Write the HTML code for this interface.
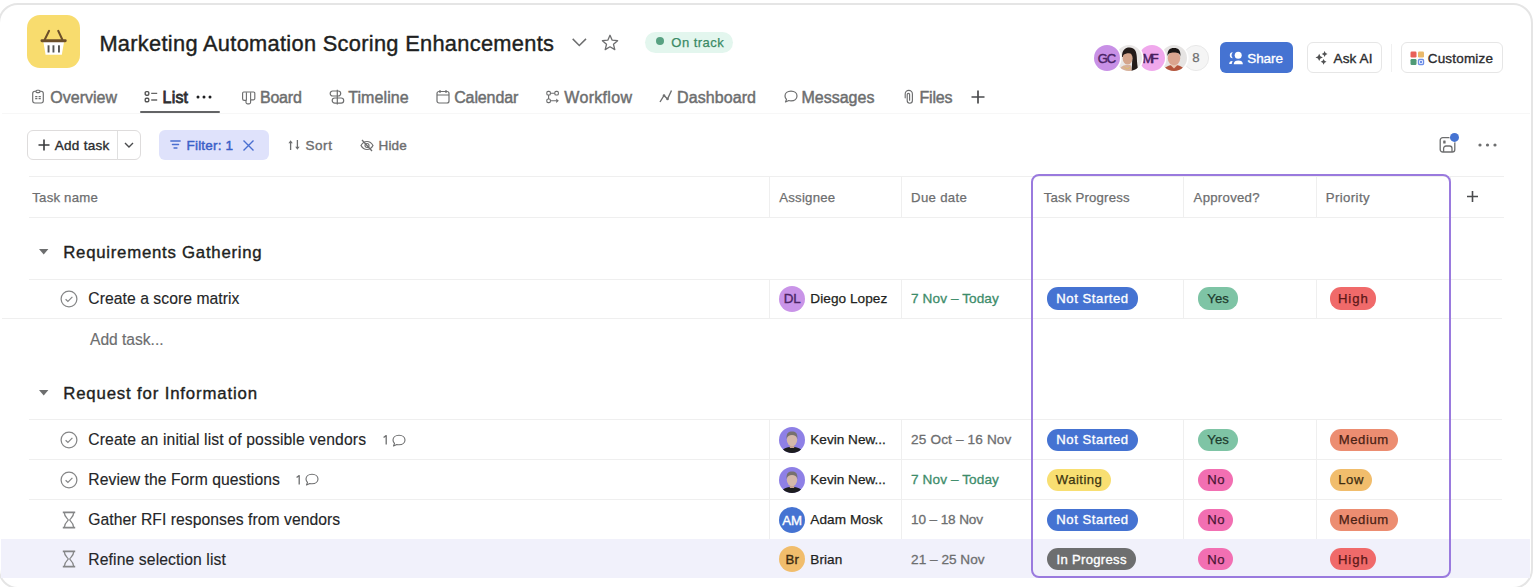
<!DOCTYPE html>
<html><head><meta charset="utf-8">
<style>
html,body{margin:0;padding:0;background:#fff;}
body{width:1533px;height:587px;position:relative;overflow:hidden;font-family:"Liberation Sans",sans-serif;}
.t{position:absolute;white-space:nowrap;line-height:normal;}
.box{position:absolute;box-sizing:border-box;}
.abs{position:absolute;overflow:visible;}
.hl{position:absolute;height:1px;background:#edeae9;}
.vl{position:absolute;width:1px;background:#edeae9;}
.pill{position:absolute;height:22px;border-radius:11px;}
</style></head><body>
<div class="box" style="left:-1.80px;top:2.80px;width:1534.30px;height:586.30px;border:2.5px solid #e5e5e5;border-radius:20px;"></div>
<div class="box" style="left:27.00px;top:15.00px;width:53.00px;height:53.00px;border-radius:13px;background:#f8dc6e"></div>
<svg class="abs" style="left:27.00px;top:15.00px" width="53" height="53" viewBox="0 0 53 53">
<path d="M22.1 15.8 L17.8 24.5 M31.2 15.8 L35.3 24.5" stroke="#6b4e2a" stroke-width="2" stroke-linecap="round"/>
<path d="M16.4 27 L37 27 L34.8 39.7 L18.6 39.7 Z" fill="#fff"/>
<rect x="13.5" y="24.2" width="26.2" height="3" rx="1.4" fill="#6b4e2a"/>
<rect x="20.6" y="30.3" width="1.9" height="7.2" fill="#555"/>
<rect x="25.5" y="30.3" width="1.9" height="7.2" fill="#555"/>
<rect x="31" y="30.3" width="1.9" height="7.2" fill="#555"/>
</svg>
<div class="t" style="left:99.40px;top:31.07px;font-size:21.80px;letter-spacing:0.307px;color:#1e1f21;-webkit-text-stroke:0.40px #1e1f21;">Marketing Automation Scoring Enhancements</div>
<svg class="abs" style="left:570.00px;top:36.00px" width="18" height="12" viewBox="0 0 18 12"><path d="M2.7 2.9 L9.3 9.5 L16 2.9" fill="none" stroke="#6d6e6f" stroke-width="1.5"/></svg>
<svg class="abs" style="left:600.00px;top:33.00px" width="20" height="19" viewBox="0 0 20 19"><path d="M10 2.3 L12.2 7.2 L17.6 7.7 L13.5 11.3 L14.8 16.6 L10 13.8 L5.2 16.6 L6.5 11.3 L2.4 7.7 L7.8 7.2 Z" fill="none" stroke="#6d6e6f" stroke-width="1.3" stroke-linejoin="round"/></svg>
<div class="box" style="left:645.00px;top:31.50px;width:88.00px;height:21.50px;border-radius:11px;background:#e3f6ee"></div>
<div class="box" style="left:655.70px;top:37.30px;width:8.20px;height:8.20px;border-radius:50%;background:#58a182"></div>
<div class="t" style="left:671.30px;top:35.34px;font-size:13.00px;letter-spacing:0.482px;color:#3a8a65;-webkit-text-stroke:0.25px #3a8a65;">On track</div>
<svg class="abs" style="left:1181.20px;top:42.80px" width="30" height="30" viewBox="0 0 30 30"><circle cx="15" cy="15" r="14.6" fill="#fff"/><circle cx="15" cy="15" r="12.6" fill="#f5f5f5" stroke="#e6e6e6" stroke-width="0.9"/></svg>
<div class="t" style="left:1192.20px;top:50.45px;font-size:13.20px;letter-spacing:-0.441px;color:#6d6e6f;-webkit-text-stroke:0.25px #6d6e6f;">8</div>
<svg class="abs" style="left:1158.90px;top:42.80px" width="30" height="30" viewBox="0 0 30 30"><circle cx="15" cy="15" r="14.6" fill="#fff"/><clipPath id="c2"><circle cx="15" cy="15" r="13"/></clipPath>
<g clip-path="url(#c2)"><rect width="30" height="30" fill="#e6e4e3"/>
<path d="M3 31 C4 24.5 8.5 22 15 22 C21.5 22 26 24.5 27 31 Z" fill="#b5553c"/>
<path d="M11 21.5 L15 25.5 L19 21.5 Z" fill="#e9c7b2"/>
<ellipse cx="15" cy="15.3" rx="6.2" ry="7" fill="#dba58f"/>
<path d="M8.6 13.5 C8 7.5 10.5 5 15 5 C19.5 5 22 7.5 21.4 13.5 C20.8 10.5 19 9.6 15 9.6 C11 9.6 9.2 10.5 8.6 13.5 Z" fill="#1b1615"/>
</g></svg>
<svg class="abs" style="left:1136.60px;top:42.80px" width="30" height="30" viewBox="0 0 30 30"><circle cx="15" cy="15" r="14.6" fill="#fff"/><circle cx="15" cy="15" r="13" fill="#f0a8ec"/></svg>
<div class="t" style="left:1142.40px;top:50.63px;font-size:13.00px;letter-spacing:-2.471px;color:#4a1f5e;-webkit-text-stroke:0.45px #4a1f5e;">MF</div>
<svg class="abs" style="left:1114.30px;top:42.80px" width="30" height="30" viewBox="0 0 30 30"><circle cx="15" cy="15" r="14.6" fill="#fff"/><clipPath id="c1"><circle cx="15" cy="15" r="13"/></clipPath>
<g clip-path="url(#c1)"><rect width="30" height="30" fill="#e9e7e6"/>
<path d="M8 14 C8 7 11 4.5 15.5 4.5 C20.5 4.5 22.5 8 22.8 14 C23 20 23.5 25 25 30 L17 30 C18 24 18.5 18 18 13 Z" fill="#231b19"/>
<ellipse cx="13.6" cy="15.2" rx="4.9" ry="6.3" fill="#d4a58c"/>
<path d="M9.2 12 C9.5 8.5 12 7.2 15 7.4 C17 7.6 18.3 9 18.6 11 C16 9.8 12 9.8 9.2 12 Z" fill="#231b19"/>
<path d="M4 30 C5 25 8 22.5 12 22 L16.5 22 C17.5 24 17.8 27 17.5 30 Z" fill="#d8b19b"/>
<path d="M10 23.5 C11.5 26 14 26.5 16 24" fill="none" stroke="#e0c060" stroke-width="0.8"/>
</g></svg>
<svg class="abs" style="left:1092.00px;top:42.80px" width="30" height="30" viewBox="0 0 30 30"><circle cx="15" cy="15" r="14.6" fill="#fff"/><circle cx="15" cy="15" r="13" fill="#c890e6"/></svg>
<div class="t" style="left:1097.70px;top:50.63px;font-size:13.00px;letter-spacing:-1.100px;color:#4b2466;-webkit-text-stroke:0.45px #4b2466;">GC</div>
<div class="box" style="left:1220.00px;top:42.20px;width:72.50px;height:31.30px;border-radius:6px;background:#4573d2"></div>
<svg class="abs" style="left:1228.00px;top:50.00px" width="17" height="16" viewBox="0 0 17 16">
<path d="M4.8 2.2 A3 3 0 0 0 4.8 8.2 A4.6 4.6 0 0 1 4.8 2.2 Z" fill="#fff"/>
<circle cx="10.2" cy="5.2" r="3.5" fill="#fff"/>
<path d="M1.2 14 C1.2 12 2.2 11 4.2 11 L4.6 11 L3.6 14 Z" fill="#fff"/>
<path d="M5.7 14.2 C5.9 11.6 7.5 10.6 10.3 10.6 C13.1 10.6 14.7 11.6 14.9 14.2 Z" fill="#fff"/>
</svg>
<div class="t" style="left:1247.20px;top:50.78px;font-size:13.50px;letter-spacing:-0.057px;color:#ffffff;-webkit-text-stroke:0.35px #ffffff;">Share</div>
<div class="box" style="left:1306.50px;top:42.20px;width:75.30px;height:31.30px;border-radius:6px;border:1px solid #e6e6e6;background:#fff"></div>
<svg class="abs" style="left:1315.00px;top:51.00px" width="14" height="14" viewBox="0 0 14 14"><path d="M4.20 2.70 L5.42 5.18 L7.90 6.40 L5.42 7.62 L4.20 10.10 L2.98 7.62 L0.50 6.40 L2.98 5.18 Z M9.60 0.10 L10.56 2.04 L12.50 3.00 L10.56 3.96 L9.60 5.90 L8.64 3.96 L6.70 3.00 L8.64 2.04 Z M8.60 7.90 L9.56 9.84 L11.50 10.80 L9.56 11.76 L8.60 13.70 L7.64 11.76 L5.70 10.80 L7.64 9.84 Z" fill="#505152"/></svg>
<div class="t" style="left:1333.50px;top:50.78px;font-size:13.50px;letter-spacing:0.147px;color:#2b2c2e;-webkit-text-stroke:0.35px #2b2c2e;">Ask AI</div>
<div class="box" style="left:1390.50px;top:44.00px;width:1.00px;height:28.00px;background:#f0f0f0"></div>
<div class="box" style="left:1400.50px;top:42.20px;width:102.50px;height:31.30px;border-radius:6px;border:1px solid #e6e6e6;background:#fff"></div>
<svg class="abs" style="left:1409.50px;top:51.00px" width="15" height="15" viewBox="0 0 15 15">
<rect x="0.5" y="0.5" width="6" height="6" rx="1.2" fill="#e8615a"/>
<rect x="8" y="0.5" width="6" height="6" rx="1.2" fill="#eab96b"/>
<rect x="0.5" y="8" width="6" height="6" rx="1.2" fill="#4f9a76"/>
<rect x="8.5" y="8.5" width="5" height="5" rx="1" fill="#fff" stroke="#6d8ee8" stroke-width="1.4"/>
<rect x="10" y="10" width="2" height="2" fill="#6d8ee8"/>
</svg>
<div class="t" style="left:1427.70px;top:50.78px;font-size:13.50px;letter-spacing:0.191px;color:#2b2c2e;-webkit-text-stroke:0.35px #2b2c2e;">Customize</div>
<div class="t" style="left:50.30px;top:88.92px;font-size:16.00px;color:#6d6e6f;-webkit-text-stroke:0.45px #6d6e6f;">Overview</div>
<div class="t" style="left:162.60px;top:88.92px;font-size:16.00px;letter-spacing:0.167px;color:#2e2f31;-webkit-text-stroke:0.80px #2e2f31;">List</div>
<div class="t" style="left:260.00px;top:88.92px;font-size:16.00px;letter-spacing:-0.224px;color:#6d6e6f;-webkit-text-stroke:0.45px #6d6e6f;">Board</div>
<div class="t" style="left:348.20px;top:88.92px;font-size:16.00px;letter-spacing:0.090px;color:#6d6e6f;-webkit-text-stroke:0.45px #6d6e6f;">Timeline</div>
<div class="t" style="left:454.20px;top:88.92px;font-size:16.00px;letter-spacing:-0.119px;color:#6d6e6f;-webkit-text-stroke:0.45px #6d6e6f;">Calendar</div>
<div class="t" style="left:564.30px;top:88.92px;font-size:16.00px;letter-spacing:0.315px;color:#6d6e6f;-webkit-text-stroke:0.45px #6d6e6f;">Workflow</div>
<div class="t" style="left:677.00px;top:88.92px;font-size:16.00px;letter-spacing:0.090px;color:#6d6e6f;-webkit-text-stroke:0.45px #6d6e6f;">Dashboard</div>
<div class="t" style="left:801.40px;top:88.92px;font-size:16.00px;letter-spacing:0.011px;color:#6d6e6f;-webkit-text-stroke:0.45px #6d6e6f;">Messages</div>
<div class="t" style="left:919.40px;top:88.92px;font-size:16.00px;letter-spacing:-0.146px;color:#6d6e6f;-webkit-text-stroke:0.45px #6d6e6f;">Files</div>
<svg class="abs" style="left:31.00px;top:88.00px" width="14" height="17" viewBox="0 0 14 17"><rect x="1.7" y="3.2" width="10.6" height="11.8" rx="2.2" fill="none" stroke="#6d6e6f" stroke-width="1.15"/><rect x="5" y="2.2" width="4" height="2.4" rx="1" fill="#fff" stroke="#6d6e6f" stroke-width="1.1"/><path d="M4.2 8.6h2.2M7.6 8.6h2.2M4.2 10.6h2.2M7.6 10.6h2.2" stroke="#6d6e6f" stroke-width="1.1"/></svg>
<svg class="abs" style="left:144.00px;top:90.00px" width="15" height="14" viewBox="0 0 15 14"><rect x="1.2" y="1.6" width="3.6" height="3.6" rx="1.2" fill="none" stroke="#555" stroke-width="1.4"/><rect x="1.2" y="8.2" width="3.6" height="3.6" rx="1.2" fill="none" stroke="#555" stroke-width="1.4"/><path d="M7.2 3.4h6M7.2 10h6" stroke="#666" stroke-width="1.4"/></svg>
<svg class="abs" style="left:196.00px;top:95.00px" width="16" height="4" viewBox="0 0 16 4"><circle cx="2" cy="2" r="1.5" fill="#1e1f21"/><circle cx="8" cy="2" r="1.5" fill="#1e1f21"/><circle cx="14" cy="2" r="1.5" fill="#1e1f21"/></svg>
<svg class="abs" style="left:241.00px;top:89.80px" width="16" height="16" viewBox="0 0 16 16"><path d="M1.6 3.2a1.2 1.2 0 0 1 1.2-1.2h9.8a1.2 1.2 0 0 1 1.2 1.2v5.2a1.4 1.4 0 0 1-1.4 1.4h-2.8v2.4a1.6 1.6 0 0 1-1.6 1.6h-1.4a1.6 1.6 0 0 1-1.6-1.6v-1.8h-1.8a1.6 1.6 0 0 1-1.6-1.6z" fill="none" stroke="#6d6e6f" stroke-width="1.15"/><path d="M5.4 2.2v8.4M9.6 2.2v7.6" stroke="#6d6e6f" stroke-width="1.1"/></svg>
<svg class="abs" style="left:328.50px;top:89.00px" width="16" height="16" viewBox="0 0 16 16"><rect x="1.2" y="2" width="10.5" height="5" rx="2.5" fill="none" stroke="#6d6e6f" stroke-width="1.2"/><rect x="3.2" y="9" width="11.5" height="5.2" rx="2.6" fill="none" stroke="#6d6e6f" stroke-width="1.2"/><path d="M8.3 0.8v14.8" stroke="#6d6e6f" stroke-width="1.2"/></svg>
<svg class="abs" style="left:435.50px;top:88.50px" width="14" height="15" viewBox="0 0 14 15"><rect x="1" y="2.5" width="12" height="11.5" rx="2" fill="none" stroke="#6d6e6f" stroke-width="1.2"/><path d="M1 6h12M4 1v3M10 1v3" stroke="#6d6e6f" stroke-width="1.2"/></svg>
<svg class="abs" style="left:546.00px;top:89.00px" width="14" height="15" viewBox="0 0 14 15"><rect x="0.8" y="2.4" width="3.6" height="3.6" rx="1.3" fill="none" stroke="#6d6e6f" stroke-width="1.1"/><rect x="8.8" y="2.4" width="3.6" height="3.6" rx="1.3" fill="none" stroke="#6d6e6f" stroke-width="1.1"/><rect x="0.8" y="10" width="3.6" height="3.6" rx="1.3" fill="none" stroke="#6d6e6f" stroke-width="1.1"/><path d="M4.4 4.2h4.4M2.6 6v4M4.4 11.8h6" fill="none" stroke="#6d6e6f" stroke-width="1.1"/><path d="M10.2 9.6L12.8 11.8L10.2 14Z" fill="#6d6e6f"/></svg>
<svg class="abs" style="left:658.50px;top:89.00px" width="14" height="14" viewBox="0 0 14 14"><path d="M1 13 L5 6.5 L8.5 10 L12.5 1.5" fill="none" stroke="#6d6e6f" stroke-width="1.4" stroke-linejoin="round"/><circle cx="5" cy="6.5" r="1.3" fill="#6d6e6f"/><circle cx="8.5" cy="10" r="1.3" fill="#6d6e6f"/></svg>
<svg class="abs" style="left:783.50px;top:90.00px" width="14" height="13" viewBox="0 0 14 13"><path d="M7 1.2C10.6 1.2 13 3.3 13 6s-2.4 4.8-6 4.8c-.8 0-1.5-.1-2.2-.3L1.5 12l1-2.6C1.6 8.5 1 7.3 1 6c0-2.7 2.4-4.8 6-4.8z" fill="none" stroke="#6d6e6f" stroke-width="1.2" stroke-linejoin="round"/></svg>
<svg class="abs" style="left:902.50px;top:88.00px" width="12" height="17" viewBox="0 0 12 17"><path d="M2.2 9.8V6a3.6 3.6 0 0 1 7.2 0v6.6a2.6 2.6 0 0 1-5.2 0V6.6a1.2 1.2 0 0 1 2.4 0v5.6" fill="none" stroke="#6d6e6f" stroke-width="1.15" stroke-linecap="round"/></svg>
<svg class="abs" style="left:970.50px;top:89.50px" width="14" height="14" viewBox="0 0 14 14"><path d="M7 0.5v13M0.5 7h13" stroke="#4a4b4d" stroke-width="1.7"/></svg>
<div class="box" style="left:140.00px;top:110.90px;width:79.50px;height:2.60px;background:#636466;border-radius:1.3px"></div>
<div class="box" style="left:2.00px;top:112.50px;width:1528.00px;height:1.20px;background:#f7f7f7"></div>
<div class="box" style="left:27.40px;top:130.20px;width:113.20px;height:30.00px;border-radius:6px;border:1px solid #dedcdc;background:#fff"></div>
<div class="box" style="left:117.20px;top:130.70px;width:1.00px;height:29.00px;background:#e0e0e0"></div>
<svg class="abs" style="left:37.00px;top:138.00px" width="14" height="14" viewBox="0 0 14 14"><path d="M7 1.5v11M1.5 7h11" stroke="#3a3b3d" stroke-width="1.6"/></svg>
<div class="t" style="left:54.80px;top:137.78px;font-size:13.50px;letter-spacing:0.281px;color:#2b2c2e;-webkit-text-stroke:0.35px #2b2c2e;">Add task</div>
<svg class="abs" style="left:122.00px;top:140.00px" width="14" height="10" viewBox="0 0 14 10"><path d="M3 3 L7 7 L11 3" fill="none" stroke="#4a4b4d" stroke-width="1.4"/></svg>
<div class="box" style="left:159.10px;top:130.10px;width:109.60px;height:29.90px;border-radius:6px;background:#dfe2fb"></div>
<svg class="abs" style="left:169.50px;top:139.00px" width="11" height="12" viewBox="0 0 11 12"><path d="M0.8 2h9.4M2.4 5.5h6.2M4 9h3" stroke="#4a6fd0" stroke-width="1.3" stroke-linecap="round"/></svg>
<div class="t" style="left:186.50px;top:137.78px;font-size:13.50px;letter-spacing:0.199px;color:#3a60c8;-webkit-text-stroke:0.45px #3a60c8;">Filter: 1</div>
<svg class="abs" style="left:242.00px;top:139.00px" width="13" height="13" viewBox="0 0 13 13"><path d="M1.5 1.5l10 10M11.5 1.5l-10 10" stroke="#4a6fd0" stroke-width="1.4"/></svg>
<svg class="abs" style="left:288.00px;top:139.00px" width="12" height="12" viewBox="0 0 12 12"><path d="M2.6 11V3.5M9.4 1v7.5" stroke="#6d6e6f" stroke-width="1.3"/><path d="M0.4 4.3L2.6 1.3L4.8 4.3Z M7.2 7.7L9.4 10.7L11.6 7.7Z" fill="#6d6e6f"/></svg>
<div class="t" style="left:305.50px;top:137.78px;font-size:13.50px;letter-spacing:0.547px;color:#6d6e6f;-webkit-text-stroke:0.40px #6d6e6f;">Sort</div>
<svg class="abs" style="left:359.50px;top:138.50px" width="14" height="13" viewBox="0 0 14 13"><path d="M1 6.5C2.5 3.8 4.6 2.5 7 2.5s4.5 1.3 6 4c-1.5 2.7-3.6 4-6 4s-4.5-1.3-6-4z" fill="none" stroke="#6d6e6f" stroke-width="1.2"/><circle cx="7" cy="6.5" r="2" fill="none" stroke="#6d6e6f" stroke-width="1.2"/><path d="M2 1l10 11" stroke="#6d6e6f" stroke-width="1.3"/></svg>
<div class="t" style="left:378.50px;top:137.78px;font-size:13.50px;letter-spacing:0.178px;color:#6d6e6f;-webkit-text-stroke:0.40px #6d6e6f;">Hide</div>
<svg class="abs" style="left:1438.00px;top:135.00px" width="22" height="20" viewBox="0 0 22 20"><rect x="2.2" y="2.6" width="14.6" height="14.4" rx="2.6" fill="none" stroke="#6d6e6f" stroke-width="1.3"/><rect x="5.2" y="5.6" width="2.4" height="2.8" rx="0.5" fill="#6d6e6f"/><path d="M5.6 17V13.4a2.4 2.4 0 0 1 2.4-2.4h3.6a2.4 2.4 0 0 1 2.4 2.4V17" fill="none" stroke="#6d6e6f" stroke-width="1.3"/><circle cx="16.5" cy="2.4" r="5" fill="#fff"/><circle cx="16.5" cy="2.4" r="4.5" fill="#4573d2"/></svg>
<svg class="abs" style="left:1477.00px;top:141.80px" width="21" height="6" viewBox="0 0 21 6"><circle cx="3" cy="3" r="1.6" fill="#6d6e6f"/><circle cx="10.5" cy="3" r="1.6" fill="#6d6e6f"/><circle cx="18" cy="3" r="1.6" fill="#6d6e6f"/></svg>
<div class="box" style="left:28.60px;top:175.80px;width:1475.40px;height:1.00px;background:#efefef"></div>
<div class="box" style="left:28.60px;top:216.60px;width:1475.40px;height:1.00px;background:#efefef"></div>
<div class="box" style="left:769.20px;top:175.80px;width:1.00px;height:40.80px;background:#efefef"></div>
<div class="box" style="left:901.20px;top:175.80px;width:1.00px;height:40.80px;background:#efefef"></div>
<div class="box" style="left:1183.20px;top:175.80px;width:1.00px;height:40.80px;background:#efefef"></div>
<div class="box" style="left:1315.50px;top:175.80px;width:1.00px;height:40.80px;background:#efefef"></div>
<div class="box" style="left:1449.50px;top:175.80px;width:1.00px;height:40.80px;background:#efefef"></div>
<div class="t" style="left:32.30px;top:190.05px;font-size:13.20px;letter-spacing:0.209px;color:#6d6e6f;-webkit-text-stroke:0.25px #6d6e6f;">Task name</div>
<div class="t" style="left:779.20px;top:190.05px;font-size:13.20px;letter-spacing:0.242px;color:#6d6e6f;-webkit-text-stroke:0.25px #6d6e6f;">Assignee</div>
<div class="t" style="left:911.10px;top:190.05px;font-size:13.20px;letter-spacing:0.304px;color:#6d6e6f;-webkit-text-stroke:0.25px #6d6e6f;">Due date</div>
<div class="t" style="left:1043.70px;top:190.05px;font-size:13.20px;letter-spacing:0.197px;color:#6d6e6f;-webkit-text-stroke:0.25px #6d6e6f;">Task Progress</div>
<div class="t" style="left:1193.60px;top:190.05px;font-size:13.20px;letter-spacing:0.269px;color:#6d6e6f;-webkit-text-stroke:0.25px #6d6e6f;">Approved?</div>
<div class="t" style="left:1325.70px;top:190.05px;font-size:13.20px;letter-spacing:0.418px;color:#6d6e6f;-webkit-text-stroke:0.25px #6d6e6f;">Priority</div>
<svg class="abs" style="left:1465.50px;top:190.00px" width="13" height="13" viewBox="0 0 13 13"><path d="M6.5 1v11M1 6.5h11" stroke="#4a4b4d" stroke-width="1.6"/></svg>
<svg class="abs" style="left:37.60px;top:247.80px" width="12" height="8" viewBox="0 0 12 8"><path d="M1 1 L10.4 1 L5.7 6.6 Z" fill="#6d6e6f"/></svg>
<div class="t" style="left:63.20px;top:242.80px;font-size:16.80px;letter-spacing:0.746px;color:#1e1f21;-webkit-text-stroke:0.38px #1e1f21;">Requirements Gathering</div>
<div class="box" style="left:28.60px;top:278.50px;width:1473.40px;height:1.00px;background:#efefef"></div>
<svg class="abs" style="left:37.60px;top:388.80px" width="12" height="8" viewBox="0 0 12 8"><path d="M1 1 L10.4 1 L5.7 6.6 Z" fill="#6d6e6f"/></svg>
<div class="t" style="left:63.20px;top:383.80px;font-size:16.80px;letter-spacing:0.838px;color:#1e1f21;-webkit-text-stroke:0.38px #1e1f21;">Request for Information</div>
<div class="box" style="left:28.60px;top:419.40px;width:1473.40px;height:1.00px;background:#efefef"></div>
<svg class="abs" style="left:60.20px;top:289.50px" width="18" height="18" viewBox="0 0 18 18"><circle cx="9" cy="9" r="7.9" fill="none" stroke="#858687" stroke-width="1.25"/><path d="M5.6 9.2 L7.9 11.4 L12.4 6.9" fill="none" stroke="#858687" stroke-width="1.2"/></svg>
<div class="t" style="left:88.30px;top:289.89px;font-size:15.70px;letter-spacing:0.056px;color:#252628;-webkit-text-stroke:0.15px #252628;">Create a score matrix</div>
<div class="box" style="left:769.20px;top:279.00px;width:1.00px;height:39.20px;background:#efefef"></div>
<div class="box" style="left:901.20px;top:279.00px;width:1.00px;height:39.20px;background:#efefef"></div>
<div class="box" style="left:1183.20px;top:279.00px;width:1.00px;height:39.20px;background:#efefef"></div>
<div class="box" style="left:1315.50px;top:279.00px;width:1.00px;height:39.20px;background:#efefef"></div>
<div class="box" style="left:779.20px;top:285.50px;width:26.00px;height:26.00px;border-radius:50%;background:#c994e8"></div><div class="t" style="left:783.63px;top:291.46px;font-size:13.40px;color:#4a2466;-webkit-text-stroke:0.35px #4a2466;">DL</div><div class="t" style="left:810.30px;top:291.19px;font-size:13.60px;letter-spacing:0.063px;color:#1e1f21;-webkit-text-stroke:0.25px #1e1f21;">Diego Lopez</div>
<div class="t" style="left:911.10px;top:291.19px;font-size:13.60px;letter-spacing:0.084px;color:#3d8c6a;-webkit-text-stroke:0.30px #3d8c6a;">7 Nov – Today</div>
<div class="box" style="left:1047.00px;top:287.40px;width:90.50px;height:22.20px;border-radius:11.1px;background:#4573d2"></div><div class="t" style="left:1056.35px;top:291.24px;font-size:13.10px;letter-spacing:0.554px;color:#ffffff;-webkit-text-stroke:0.35px #ffffff;">Not Started</div>
<div class="box" style="left:1198.30px;top:287.40px;width:39.50px;height:22.20px;border-radius:11.1px;background:#7ec4a5"></div><div class="t" style="left:1207.25px;top:291.24px;font-size:13.10px;letter-spacing:0.114px;color:#1d3b2d;-webkit-text-stroke:0.25px #1d3b2d;">Yes</div>
<div class="box" style="left:1329.50px;top:287.40px;width:46.80px;height:22.20px;border-radius:11.1px;background:#f06a6a"></div><div class="t" style="left:1337.90px;top:291.24px;font-size:13.10px;letter-spacing:1.019px;color:#5c1717;-webkit-text-stroke:0.25px #5c1717;">High</div>
<div class="box" style="left:1.50px;top:318.20px;width:1500.50px;height:1.00px;background:#efefef"></div>
<div class="t" style="left:90.00px;top:330.58px;font-size:15.60px;letter-spacing:-0.010px;color:#6d6e6f;-webkit-text-stroke:0.15px #6d6e6f;">Add task...</div>
<svg class="abs" style="left:60.20px;top:430.70px" width="18" height="18" viewBox="0 0 18 18"><circle cx="9" cy="9" r="7.9" fill="none" stroke="#858687" stroke-width="1.25"/><path d="M5.6 9.2 L7.9 11.4 L12.4 6.9" fill="none" stroke="#858687" stroke-width="1.2"/></svg>
<div class="t" style="left:88.30px;top:431.09px;font-size:15.70px;letter-spacing:0.137px;color:#252628;-webkit-text-stroke:0.15px #252628;">Create an initial list of possible vendors</div>
<svg class="abs" style="left:382.60px;top:435.00px" width="6" height="12" viewBox="0 0 6 12"><path d="M0.6 2.6 L3.2 0.6 L3.2 9.6" fill="none" stroke="#6d6e6f" stroke-width="1.3" stroke-linejoin="round"/></svg>
<svg class="abs" style="left:392.20px;top:433.50px" width="14" height="13" viewBox="0 0 14 13"><path d="M7 1.2C10.6 1.2 13 3.3 13 6s-2.4 4.8-6 4.8c-.8 0-1.5-.1-2.2-.3L1.5 12l1-2.6C1.6 8.5 1 7.3 1 6c0-2.7 2.4-4.8 6-4.8z" fill="none" stroke="#6d6e6f" stroke-width="1.1" stroke-linejoin="round"/></svg>
<div class="box" style="left:769.20px;top:419.90px;width:1.00px;height:39.30px;background:#efefef"></div>
<div class="box" style="left:901.20px;top:419.90px;width:1.00px;height:39.30px;background:#efefef"></div>
<div class="box" style="left:1183.20px;top:419.90px;width:1.00px;height:39.30px;background:#efefef"></div>
<div class="box" style="left:1315.50px;top:419.90px;width:1.00px;height:39.30px;background:#efefef"></div>
<svg class="abs" style="left:779.20px;top:426.70px" width="26" height="26" viewBox="0 0 26 26">
<clipPath id="kc439"><circle cx="13" cy="13" r="13"/></clipPath>
<g clip-path="url(#kc439)">
<rect width="26" height="26" fill="#8e80e6"/>
<path d="M2 27 C3 21.5 7 20 13 20 C19 20 23 21.5 24 27 Z" fill="#1c1c1e"/>
<rect x="10.8" y="17" width="4.4" height="4" fill="#c7a491"/>
<ellipse cx="13" cy="12.8" rx="5.2" ry="6.4" fill="#d4b8aa"/>
<path d="M7.6 12 C7.2 5.8 9.6 4.6 13 4.6 C16.4 4.6 18.8 5.8 18.4 12 C17.6 9 15.8 8 13 8 C10.2 8 8.4 9 7.6 12 Z" fill="#77716f"/>
</g></svg><div class="t" style="left:810.30px;top:432.39px;font-size:13.60px;color:#1e1f21;-webkit-text-stroke:0.25px #1e1f21;">Kevin New...</div>
<div class="t" style="left:911.10px;top:432.39px;font-size:13.60px;letter-spacing:0.145px;color:#6d6e6f;-webkit-text-stroke:0.30px #6d6e6f;">25 Oct – 16 Nov</div>
<div class="box" style="left:1047.00px;top:428.60px;width:90.50px;height:22.20px;border-radius:11.1px;background:#4573d2"></div><div class="t" style="left:1056.35px;top:432.44px;font-size:13.10px;letter-spacing:0.554px;color:#ffffff;-webkit-text-stroke:0.35px #ffffff;">Not Started</div>
<div class="box" style="left:1198.30px;top:428.60px;width:39.50px;height:22.20px;border-radius:11.1px;background:#7ec4a5"></div><div class="t" style="left:1207.25px;top:432.44px;font-size:13.10px;letter-spacing:0.114px;color:#1d3b2d;-webkit-text-stroke:0.25px #1d3b2d;">Yes</div>
<div class="box" style="left:1329.50px;top:428.60px;width:68.00px;height:22.20px;border-radius:11.1px;background:#ec8d71"></div><div class="t" style="left:1338.80px;top:432.44px;font-size:13.10px;letter-spacing:0.561px;color:#4a2114;-webkit-text-stroke:0.25px #4a2114;">Medium</div>
<div class="box" style="left:28.60px;top:459.20px;width:1473.40px;height:1.00px;background:#efefef"></div>
<svg class="abs" style="left:60.20px;top:470.60px" width="18" height="18" viewBox="0 0 18 18"><circle cx="9" cy="9" r="7.9" fill="none" stroke="#858687" stroke-width="1.25"/><path d="M5.6 9.2 L7.9 11.4 L12.4 6.9" fill="none" stroke="#858687" stroke-width="1.2"/></svg>
<div class="t" style="left:88.30px;top:470.99px;font-size:15.70px;letter-spacing:0.061px;color:#252628;-webkit-text-stroke:0.15px #252628;">Review the Form questions</div>
<svg class="abs" style="left:295.70px;top:474.90px" width="6" height="12" viewBox="0 0 6 12"><path d="M0.6 2.6 L3.2 0.6 L3.2 9.6" fill="none" stroke="#6d6e6f" stroke-width="1.3" stroke-linejoin="round"/></svg>
<svg class="abs" style="left:305.30px;top:473.40px" width="14" height="13" viewBox="0 0 14 13"><path d="M7 1.2C10.6 1.2 13 3.3 13 6s-2.4 4.8-6 4.8c-.8 0-1.5-.1-2.2-.3L1.5 12l1-2.6C1.6 8.5 1 7.3 1 6c0-2.7 2.4-4.8 6-4.8z" fill="none" stroke="#6d6e6f" stroke-width="1.1" stroke-linejoin="round"/></svg>
<div class="box" style="left:769.20px;top:459.20px;width:1.00px;height:40.20px;background:#efefef"></div>
<div class="box" style="left:901.20px;top:459.20px;width:1.00px;height:40.20px;background:#efefef"></div>
<div class="box" style="left:1183.20px;top:459.20px;width:1.00px;height:40.20px;background:#efefef"></div>
<div class="box" style="left:1315.50px;top:459.20px;width:1.00px;height:40.20px;background:#efefef"></div>
<svg class="abs" style="left:779.20px;top:466.60px" width="26" height="26" viewBox="0 0 26 26">
<clipPath id="kc479"><circle cx="13" cy="13" r="13"/></clipPath>
<g clip-path="url(#kc479)">
<rect width="26" height="26" fill="#8e80e6"/>
<path d="M2 27 C3 21.5 7 20 13 20 C19 20 23 21.5 24 27 Z" fill="#1c1c1e"/>
<rect x="10.8" y="17" width="4.4" height="4" fill="#c7a491"/>
<ellipse cx="13" cy="12.8" rx="5.2" ry="6.4" fill="#d4b8aa"/>
<path d="M7.6 12 C7.2 5.8 9.6 4.6 13 4.6 C16.4 4.6 18.8 5.8 18.4 12 C17.6 9 15.8 8 13 8 C10.2 8 8.4 9 7.6 12 Z" fill="#77716f"/>
</g></svg><div class="t" style="left:810.30px;top:472.29px;font-size:13.60px;color:#1e1f21;-webkit-text-stroke:0.25px #1e1f21;">Kevin New...</div>
<div class="t" style="left:911.10px;top:472.29px;font-size:13.60px;letter-spacing:0.092px;color:#3d8c6a;-webkit-text-stroke:0.30px #3d8c6a;">7 Nov – Today</div>
<div class="box" style="left:1047.00px;top:468.50px;width:63.70px;height:22.20px;border-radius:11.1px;background:#f8df72"></div><div class="t" style="left:1055.85px;top:472.34px;font-size:13.10px;letter-spacing:0.467px;color:#3b3410;-webkit-text-stroke:0.25px #3b3410;">Waiting</div>
<div class="box" style="left:1198.30px;top:468.50px;width:35.10px;height:22.20px;border-radius:11.1px;background:#f26fb2"></div><div class="t" style="left:1207.20px;top:472.34px;font-size:13.10px;letter-spacing:0.553px;color:#4a1432;-webkit-text-stroke:0.25px #4a1432;">No</div>
<div class="box" style="left:1329.50px;top:468.50px;width:42.60px;height:22.20px;border-radius:11.1px;background:#f1bd6c"></div><div class="t" style="left:1338.20px;top:472.34px;font-size:13.10px;letter-spacing:0.584px;color:#3d2c10;-webkit-text-stroke:0.25px #3d2c10;">Low</div>
<div class="box" style="left:28.60px;top:499.40px;width:1473.40px;height:1.00px;background:#efefef"></div>
<svg class="abs" style="left:62.20px;top:510.60px" width="14" height="18" viewBox="0 0 14 18"><path d="M0.8 1.3h12.4M0.8 16.6h12.4" stroke="#858687" stroke-width="1.7"/><path d="M2.3 1.5C2.3 6.5 6.2 7.8 6.2 9S2.3 11.5 2.3 16.5M11.7 1.5C11.7 6.5 7.8 7.8 7.8 9s3.9 2.5 3.9 7.5" fill="none" stroke="#858687" stroke-width="1.3"/></svg>
<div class="t" style="left:88.30px;top:510.99px;font-size:15.70px;letter-spacing:0.049px;color:#252628;-webkit-text-stroke:0.15px #252628;">Gather RFI responses from vendors</div>
<div class="box" style="left:769.20px;top:499.40px;width:1.00px;height:39.20px;background:#efefef"></div>
<div class="box" style="left:901.20px;top:499.40px;width:1.00px;height:39.20px;background:#efefef"></div>
<div class="box" style="left:1183.20px;top:499.40px;width:1.00px;height:39.20px;background:#efefef"></div>
<div class="box" style="left:1315.50px;top:499.40px;width:1.00px;height:39.20px;background:#efefef"></div>
<div class="box" style="left:779.20px;top:506.60px;width:26.00px;height:26.00px;border-radius:50%;background:#4573d2"></div><div class="t" style="left:782.30px;top:512.67px;font-size:13.20px;color:#ffffff;-webkit-text-stroke:0.35px #ffffff;">AM</div><div class="t" style="left:810.30px;top:512.29px;font-size:13.60px;letter-spacing:0.062px;color:#1e1f21;-webkit-text-stroke:0.25px #1e1f21;">Adam Mosk</div>
<div class="t" style="left:911.10px;top:512.29px;font-size:13.60px;letter-spacing:-0.134px;color:#6d6e6f;-webkit-text-stroke:0.30px #6d6e6f;">10 – 18 Nov</div>
<div class="box" style="left:1047.00px;top:508.50px;width:90.50px;height:22.20px;border-radius:11.1px;background:#4573d2"></div><div class="t" style="left:1056.35px;top:512.34px;font-size:13.10px;letter-spacing:0.554px;color:#ffffff;-webkit-text-stroke:0.35px #ffffff;">Not Started</div>
<div class="box" style="left:1198.30px;top:508.50px;width:35.10px;height:22.20px;border-radius:11.1px;background:#f26fb2"></div><div class="t" style="left:1207.20px;top:512.34px;font-size:13.10px;letter-spacing:0.553px;color:#4a1432;-webkit-text-stroke:0.25px #4a1432;">No</div>
<div class="box" style="left:1329.50px;top:508.50px;width:68.00px;height:22.20px;border-radius:11.1px;background:#ec8d71"></div><div class="t" style="left:1338.80px;top:512.34px;font-size:13.10px;letter-spacing:0.561px;color:#4a2114;-webkit-text-stroke:0.25px #4a2114;">Medium</div>
<div class="box" style="left:28.60px;top:538.60px;width:1473.40px;height:1.00px;background:#efefef"></div>
<div class="box" style="left:1.00px;top:538.60px;width:1529.00px;height:39.00px;background:#f1f1fb"></div>
<svg class="abs" style="left:62.20px;top:550.20px" width="14" height="18" viewBox="0 0 14 18"><path d="M0.8 1.3h12.4M0.8 16.6h12.4" stroke="#858687" stroke-width="1.7"/><path d="M2.3 1.5C2.3 6.5 6.2 7.8 6.2 9S2.3 11.5 2.3 16.5M11.7 1.5C11.7 6.5 7.8 7.8 7.8 9s3.9 2.5 3.9 7.5" fill="none" stroke="#858687" stroke-width="1.3"/></svg>
<div class="t" style="left:88.30px;top:550.59px;font-size:15.70px;letter-spacing:0.122px;color:#252628;-webkit-text-stroke:0.15px #252628;">Refine selection list</div>
<div class="box" style="left:779.20px;top:546.20px;width:26.00px;height:26.00px;border-radius:50%;background:#f1bd6c"></div><div class="t" style="left:785.60px;top:552.27px;font-size:13.20px;color:#3b2a10;-webkit-text-stroke:0.35px #3b2a10;">Br</div><div class="t" style="left:810.30px;top:551.89px;font-size:13.60px;letter-spacing:0.062px;color:#1e1f21;-webkit-text-stroke:0.25px #1e1f21;">Brian</div>
<div class="t" style="left:911.10px;top:551.89px;font-size:13.60px;letter-spacing:0.016px;color:#6d6e6f;-webkit-text-stroke:0.30px #6d6e6f;">21 – 25 Nov</div>
<div class="box" style="left:1047.00px;top:548.10px;width:89.00px;height:22.20px;border-radius:11.1px;background:#6d6e6f"></div><div class="t" style="left:1056.50px;top:551.94px;font-size:13.10px;letter-spacing:0.301px;color:#ffffff;-webkit-text-stroke:0.35px #ffffff;">In Progress</div>
<div class="box" style="left:1198.30px;top:548.10px;width:35.10px;height:22.20px;border-radius:11.1px;background:#f26fb2"></div><div class="t" style="left:1207.20px;top:551.94px;font-size:13.10px;letter-spacing:0.553px;color:#4a1432;-webkit-text-stroke:0.25px #4a1432;">No</div>
<div class="box" style="left:1329.50px;top:548.10px;width:46.80px;height:22.20px;border-radius:11.1px;background:#f06a6a"></div><div class="t" style="left:1337.90px;top:551.94px;font-size:13.10px;letter-spacing:1.019px;color:#5c1717;-webkit-text-stroke:0.25px #5c1717;">High</div>
<div class="box" style="left:1031.00px;top:174.00px;width:419.80px;height:404.00px;border:2px solid #9a7ade;border-radius:8px;"></div>
</body></html>
